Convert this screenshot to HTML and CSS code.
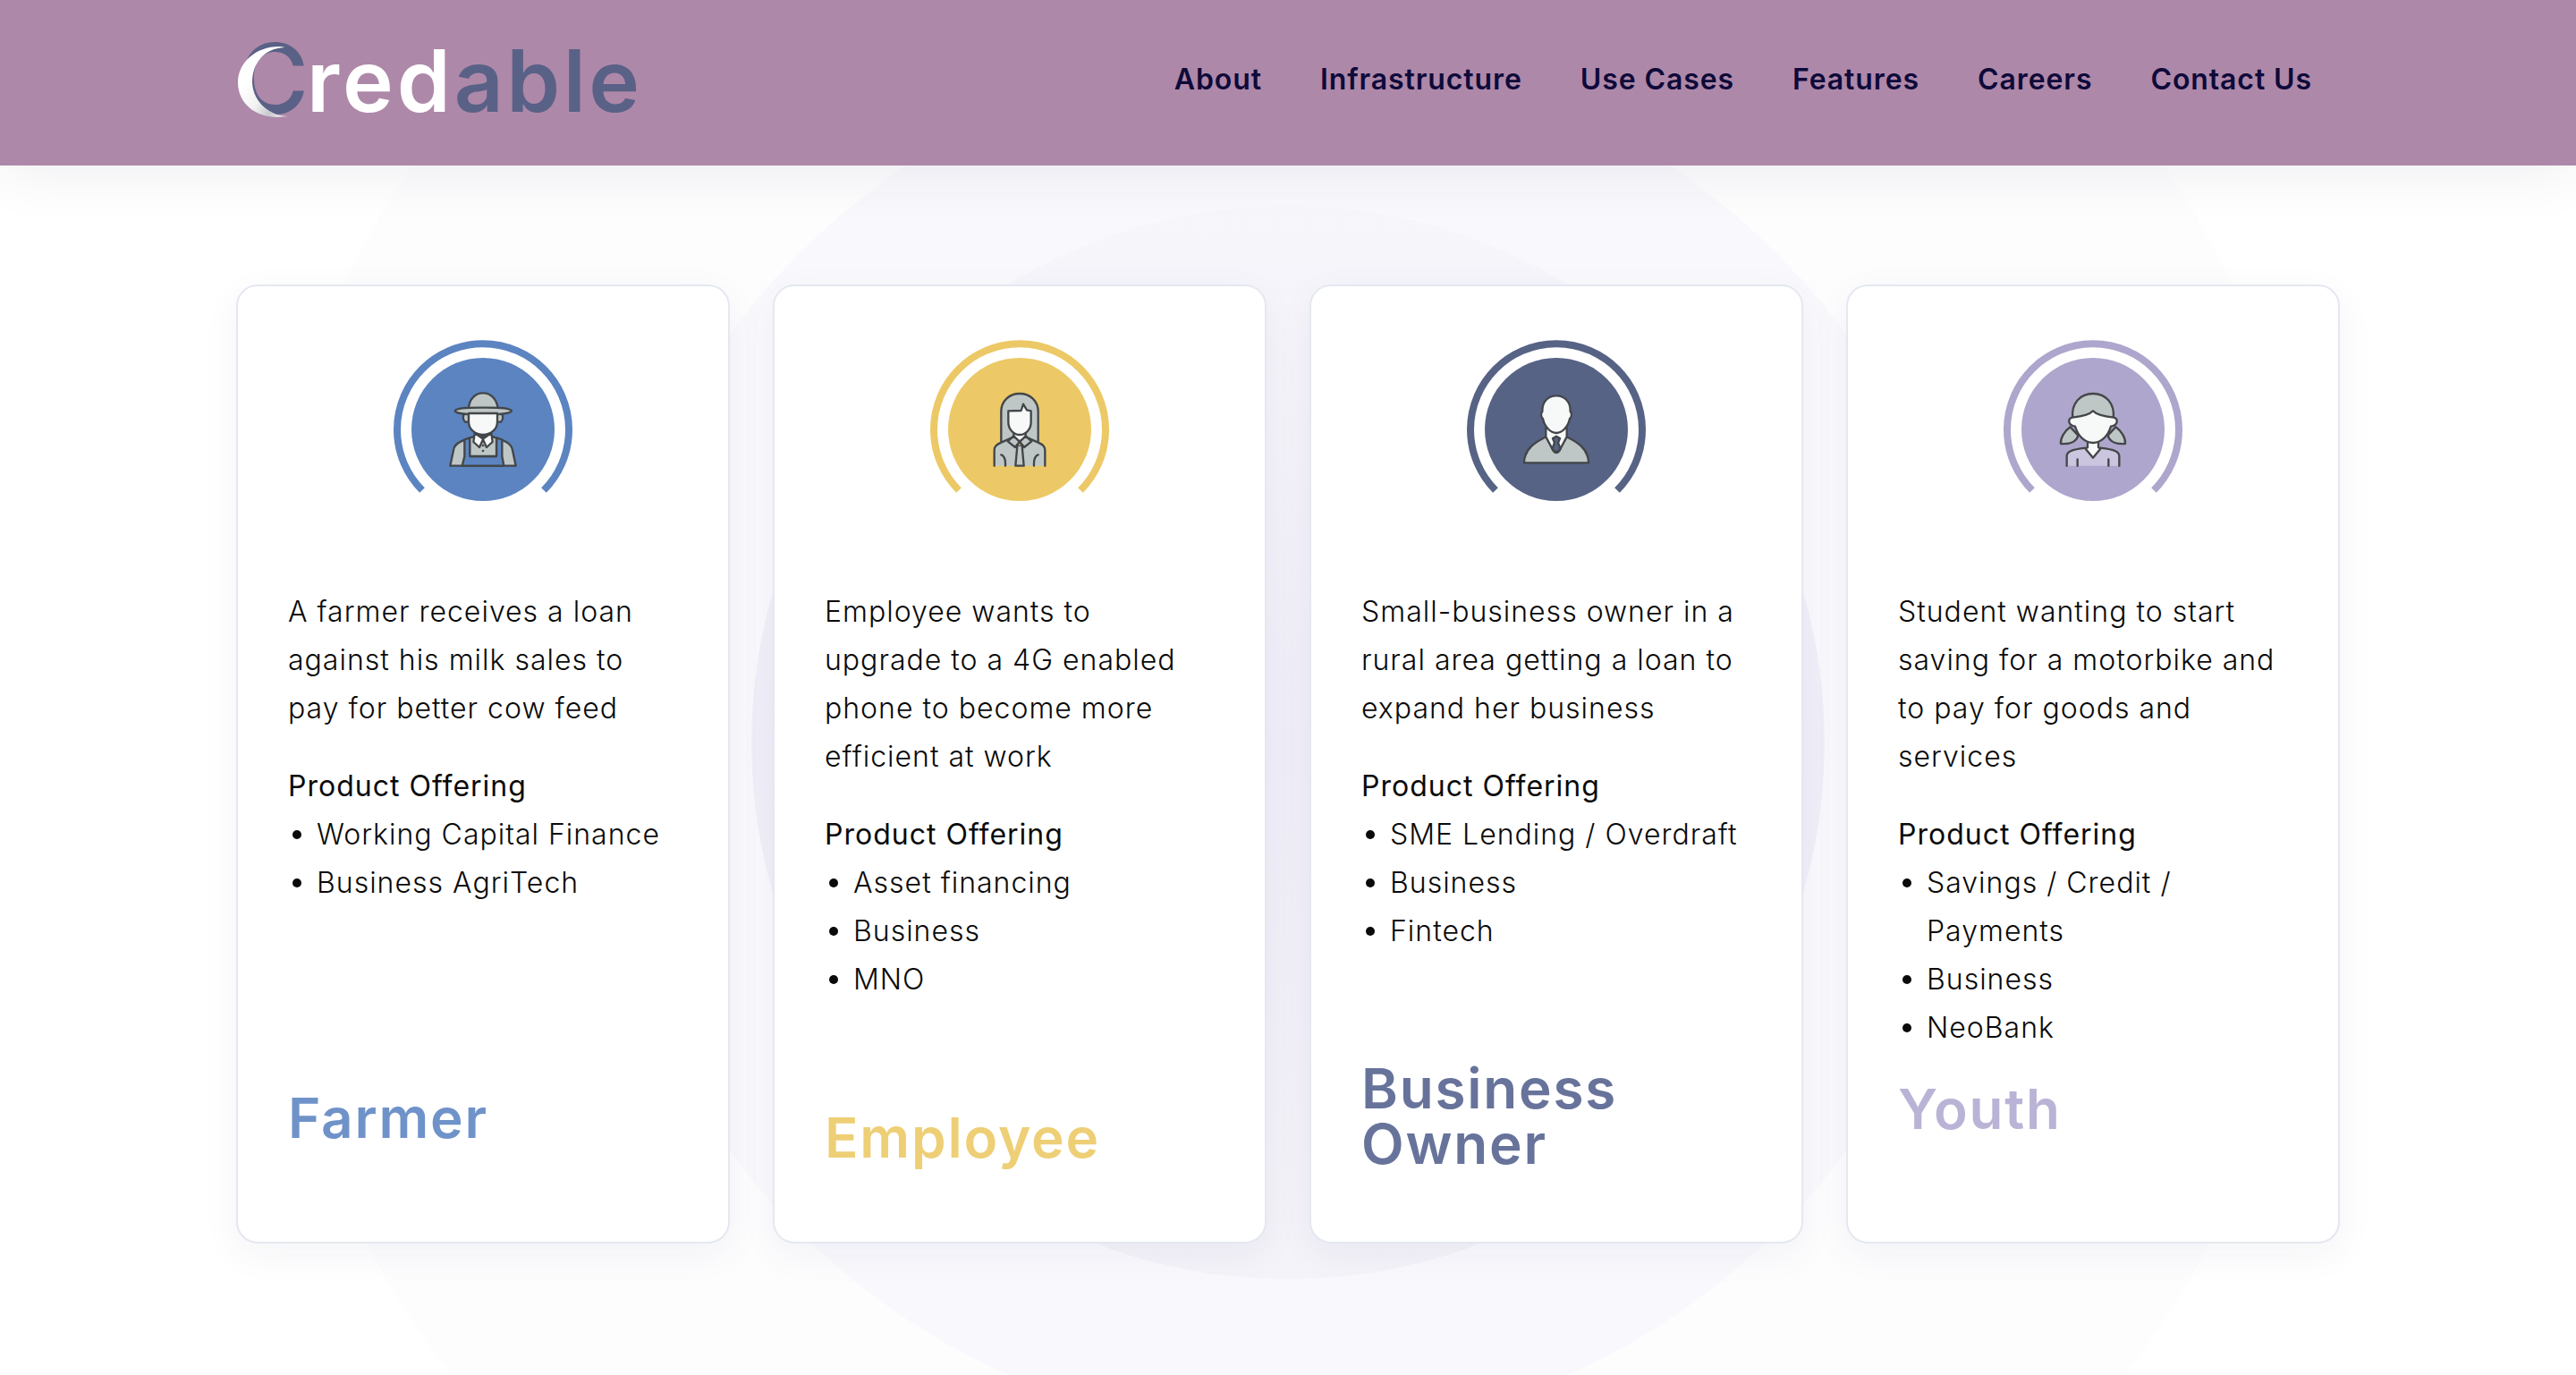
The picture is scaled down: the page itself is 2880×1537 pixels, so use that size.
FILE: index.html
```html
<!DOCTYPE html>
<html lang="en">
<head>
<meta charset="utf-8">
<title>Credable</title>
<link rel="stylesheet" href="styles.css">
</head>
<body>
<div class="backdrop" aria-hidden="true">
  <div class="disc disc-lg"></div>
  <div class="disc disc-md"></div>
  <div class="disc disc-sm"></div>
</div>
<header class="site-header">
  <a class="logo" href="#">
    <span class="logo-c">C</span><span class="logo-red">red</span><span class="logo-able">able</span>
    <svg class="logo-crescent" viewBox="0 0 90 90" aria-hidden="true">
      <defs>
        <linearGradient id="cres" x1="0.2" y1="0.45" x2="0.8" y2="1">
          <stop offset="0" stop-color="#ffffff"/>
          <stop offset="0.45" stop-color="#f2f2f2"/>
          <stop offset="0.8" stop-color="#c9c9cd"/>
          <stop offset="1" stop-color="#e4e2e8"/>
        </linearGradient>
      </defs>
      <path fill="url(#cres)" d="M48 2 C22 2 2 20 2 42 C2 66 22 81 46 81 C50 81 54 80 58 80 C40 80 19 66 18 42 C18 22 30 4 54 3 C52 2 50 2 48 2 Z"/>
    </svg>
  </a>
  <nav class="main-nav">
    <a href="#">About</a>
    <a href="#">Infrastructure</a>
    <a href="#">Use Cases</a>
    <a href="#">Features</a>
    <a href="#">Careers</a>
    <a href="#">Contact Us</a>
  </nav>
</header>
<main class="cards">
  <article class="card card-farmer">
    <svg class="avatar" viewBox="0 0 720 630" aria-hidden="true">
      <circle class="tone" cx="360" cy="360" r="240"/>
      <path class="ring" d="M156 564 A288 288 0 1 1 564 564"/>
      <path class="gray ln" d="M312 292 C312 258 335 238 360 238 C385 238 408 258 410 292 Z"/>
      <path class="gray ln" d="M300 335 C290 325 292 310 302 305 H418 C428 310 430 325 420 335 Z"/>
      <path class="gray ln" d="M266 298 C272 286 315 287 360 287 C405 287 450 286 456 298 C450 310 405 310 360 310 C315 310 272 310 266 298 Z"/>
      <path class="gray ln" d="M250 482 L262 425 C265 408 285 400 300 394 L332 384 H388 L420 394 C436 400 455 408 458 425 L470 482 Z"/>
      <path class="tone ln" d="M298 394 L316 388 V450 H405 V388 L424 394 V450 L430 482 H290 L298 450 Z"/>
      <path class="gray ln" d="M316 388 L332 384 H388 L405 388 V450 H316 Z"/>
      <path class="white ln" d="M312 306 H408 V335 C408 360 385 378 360 378 C335 378 312 360 312 335 Z"/>
      <path class="white ln" d="M332 372 L360 392 L388 372 L392 402 L372 420 L360 394 L348 420 L328 402 Z"/>
      <circle class="dot" cx="360" cy="414" r="4"/>
      <circle class="dot" cx="360" cy="432" r="4"/>
    </svg>
    <p class="intro">A farmer receives a loan<br>against his milk sales to<br>pay for better cow feed</p>
    <h3 class="offer">Product Offering</h3>
    <ul class="offer-list">
      <li>Working Capital Finance</li>
      <li>Business AgriTech</li>
    </ul>
    <h2 class="role">Farmer</h2>
  </article>

  <article class="card card-employee">
    <svg class="avatar" viewBox="0 0 720 630" aria-hidden="true">
      <circle class="tone" cx="360" cy="360" r="240"/>
      <path class="ring" d="M156 564 A288 288 0 1 1 564 564"/>
      <path class="gray ln" d="M298 405 V300 C298 265 325 240 360 240 C395 240 422 265 422 300 V405 Z"/>
      <path class="gray" d="M275 482 V430 C275 415 285 410 298 404 L340 385 H380 L422 404 C435 410 445 415 445 430 V482 Z"/>
      <path class="ln" d="M275 482 V430 C275 415 285 410 298 404 L340 385 M380 385 L422 404 C435 410 445 415 445 430 V482"/>
      <path class="white ln" d="M340 360 V385 L360 400 L380 385 V360 Z"/>
      <path class="white ln" d="M322 298 L365 297 L372 275 L384 295 L398 298 V335 C398 360 380 378 360 378 C340 378 322 360 322 335 Z"/>
      <path class="gray ln" d="M340 382 L320 400 L345 420 L360 402 L375 420 L400 400 L380 382 L360 402 Z"/>
      <path class="tone ln" d="M360 402 L372 416 H348 Z"/>
      <path class="gray ln" d="M352 416 L346 482 H374 L368 416"/>
      <path class="ln" d="M298 445 C312 450 313 465 312 482 M422 445 C408 450 407 465 408 482"/>
    </svg>
    <p class="intro">Employee wants to<br>upgrade to a 4G enabled<br>phone to become more<br>efficient at work</p>
    <h3 class="offer">Product Offering</h3>
    <ul class="offer-list">
      <li>Asset financing</li>
      <li>Business</li>
      <li>MNO</li>
    </ul>
    <h2 class="role">Employee</h2>
  </article>

  <article class="card card-owner">
    <svg class="avatar" viewBox="0 0 720 630" aria-hidden="true">
      <circle class="tone" cx="360" cy="360" r="240"/>
      <path class="ring" d="M156 564 A288 288 0 1 1 564 564"/>
      <path class="gray ln" d="M252 472 C252 420 300 398 325 385 H395 C420 398 468 420 468 472 Z"/>
      <path class="white ln" d="M325 355 V385 L350 432 Q360 445 370 432 L395 385 V355 Z"/>
      <path class="tone ln" d="M348 390 L360 383 L372 390 L366 405 L374 425 Q360 445 346 425 L354 405 Z"/>
      <path class="white ln" d="M313 300 C312 265 335 247 360 247 C385 247 408 265 407 300 C413 305 412 320 405 324 C400 350 380 372 360 372 C340 372 320 350 315 324 C308 320 307 305 313 300 Z"/>
    </svg>
    <p class="intro">Small-business owner in a<br>rural area getting a loan to<br>expand her business</p>
    <h3 class="offer">Product Offering</h3>
    <ul class="offer-list">
      <li>SME Lending / Overdraft</li>
      <li>Business</li>
      <li>Fintech</li>
    </ul>
    <h2 class="role">Business Owner</h2>
  </article>

  <article class="card card-youth">
    <svg class="avatar" viewBox="0 0 720 630" aria-hidden="true">
      <circle class="tone" cx="360" cy="360" r="240"/>
      <path class="ring" d="M156 564 A288 288 0 1 1 564 564"/>
      <path class="gray ln" d="M284 352 C265 365 250 388 252 408 C280 410 305 402 310 380 Z"/>
      <path class="gray ln" d="M436 352 C455 365 470 388 468 408 C440 410 415 402 410 380 Z"/>
      <path class="gray ln" d="M292 325 C285 270 320 240 360 240 C400 240 435 270 428 325 Z"/>
      <path class="pale" d="M272 482 V450 C272 435 285 428 335 422 H385 C435 428 448 435 448 450 V482 Z"/>
      <path class="ln" d="M272 482 V450 C272 435 285 428 335 422 M385 422 C435 428 448 435 448 450 V482 M308 460 V482 M412 460 V482"/>
      <path class="white ln" d="M342 400 V420 L335 425 L360 455 L385 425 L378 420 V400 Z"/>
      <path class="white ln" d="M360 298 C345 315 310 318 290 320 C275 325 275 345 300 350 C310 385 335 405 360 405 C385 405 410 385 420 350 C445 345 445 325 430 320 C410 318 375 315 360 298 Z"/>
    </svg>
    <p class="intro">Student wanting to start<br>saving for a motorbike and<br>to pay for goods and<br>services</p>
    <h3 class="offer">Product Offering</h3>
    <ul class="offer-list">
      <li><span>Savings / Credit /<br>Payments</span></li>
      <li>Business</li>
      <li>NeoBank</li>
    </ul>
    <h2 class="role">Youth</h2>
  </article>
</main>
</body>
</html>
```

FILE: styles.css
```css
* { box-sizing: border-box; }
html, body { margin: 0; padding: 0; }
body {
  position: relative;
  width: 2880px;
  height: 1537px;
  overflow: hidden;
  background: #ffffff;
  color: #0a0a0a;
  font-family: Inter, "Liberation Sans", sans-serif;
}
.backdrop { position: absolute; inset: 0; overflow: hidden; }
.disc { position: absolute; border-radius: 50%; }
.disc-lg { left: 267px; top: -343px; width: 2346px; height: 2346px; background: #fdfdfe; }
.disc-md { left: 667px; top: 57px; width: 1546px; height: 1546px; background: #f9f9fd; }
.disc-sm {
  left: 840px;
  top: 230px;
  width: 1200px;
  height: 1200px;
  background: linear-gradient(180deg, #f7f6fb 0%, #efeef8 50%, #f4f3f9 100%);
}

.site-header {
  position: relative;
  display: flex;
  align-items: flex-start;
  justify-content: space-between;
  height: 185px;
  padding: 0 295px 0 266px;
  background: #ae88a9;
  box-shadow: 0 8px 60px rgba(20, 20, 50, 0.07);
}
.logo {
  position: relative;
  display: flex;
  align-items: baseline;
  padding-top: 29px;
  font-size: 96px;
  line-height: 114px;
  font-weight: 600;
  letter-spacing: 3.5px;
  text-decoration: none;
}
.logo-c { width: 77px; font-size: 108px; font-weight: 500; color: #5a6186; transform: translateY(2px); }
.logo-red { color: #ffffff; letter-spacing: 4px; }
.logo-able { color: #5a6186; }
.logo-crescent { position: absolute; left: -2px; top: 50px; width: 90px; height: 90px; }

.main-nav { display: flex; gap: 65px; padding-top: 70px; }
.main-nav a {
  font-size: 32px;
  line-height: 38px;
  font-weight: 600;
  letter-spacing: 0.9px;
  color: #0e0a3a;
  text-decoration: none;
}

.cards {
  position: relative;
  display: grid;
  grid-template-columns: repeat(4, 552px);
  gap: 48px;
  padding: 133px 264px 0;
}
.card {
  display: flex;
  flex-direction: column;
  height: 1072px;
  padding: 40px 56px 0;
  background: #ffffff;
  border: 2px solid #e4e8f0;
  border-radius: 24px;
  box-shadow: 0 12px 44px rgba(30, 30, 90, 0.05);
}
.avatar { flex: none; display: block; width: 240px; height: 210px; margin: 0 auto; }
.ln { stroke: #434649; stroke-width: 7; stroke-linejoin: round; stroke-linecap: round; fill: none; }
.gray { fill: #bfc6c6; }
.white { fill: #f7f9f8; }
.pale { fill: #cbc5df; }
.dot { fill: #434649; }
.ring { fill: none; stroke-width: 24; }
.gray.ln { fill: #bfc6c6; }
.white.ln { fill: #f7f9f8; }

.card-farmer { --tone: #5b84c1; --title: #6f93c9; --role-gap: 205px; }
.card-employee { --tone: #ecc966; --title: #eecf76; --role-gap: 119px; }
.card-owner { --tone: #566385; --title: #67739a; --role-gap: 118px; }
.card-youth { --tone: #aea6cc; --title: #bab3d6; --role-gap: 33px; }
.tone, .tone.ln { fill: var(--tone); }
.ring { stroke: var(--tone); }

.intro, .offer, .offer-list li {
  font-size: 32px;
  line-height: 54px;
  font-weight: 300;
  letter-spacing: 1px;
}
.intro { margin: 87px 0 0; }
.offer { margin: 33px 0 0; font-weight: 400; }
.offer-list { list-style: none; margin: 0; padding: 0; }
.offer-list li { display: flex; }
.offer-list li::before {
  content: "";
  flex: none;
  width: 10px;
  height: 10px;
  margin: 22px 17px 0 5px;
  border-radius: 50%;
  background: #0a0a0a;
}
.role {
  margin: var(--role-gap) 0 0;
  font-size: 62px;
  line-height: 62px;
  font-weight: 600;
  letter-spacing: 1.8px;
  color: var(--title);
}
```
